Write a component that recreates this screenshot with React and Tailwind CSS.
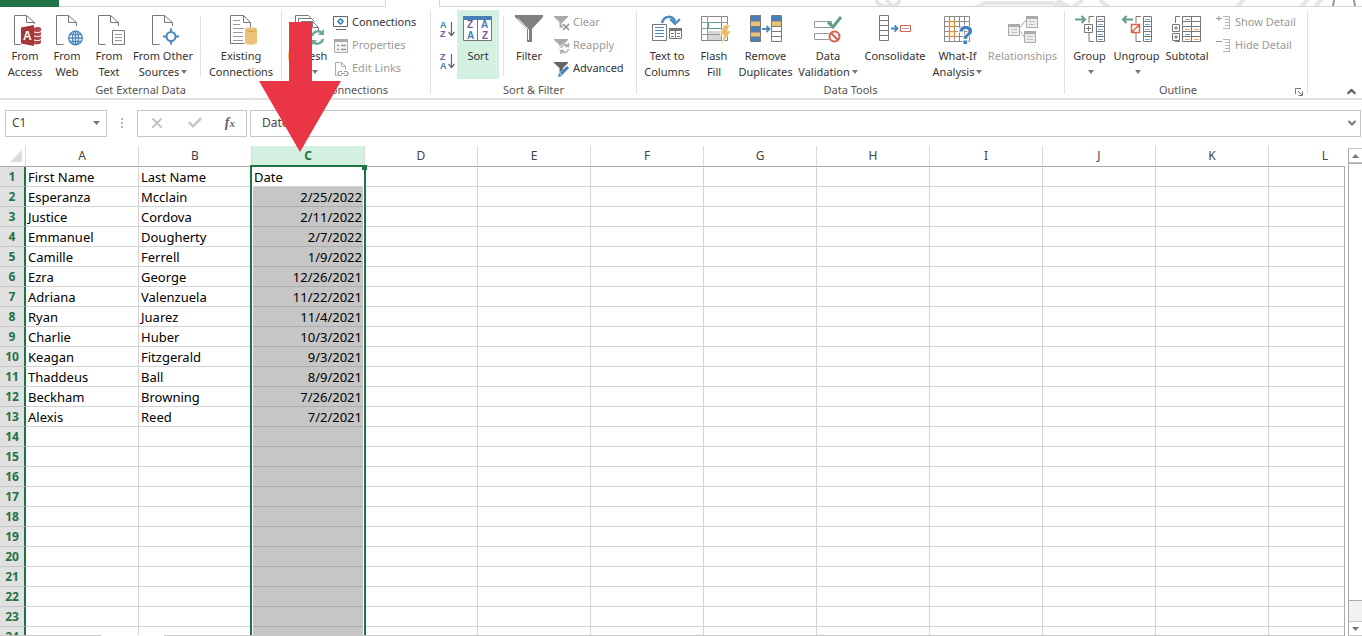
import clsx from "clsx";
import { ChevronDown, ChevronUp, X, Check } from "lucide-react";

const people = [
  ["Esperanza", "Mcclain", "2/25/2022"],
  ["Justice", "Cordova", "2/11/2022"],
  ["Emmanuel", "Dougherty", "2/7/2022"],
  ["Camille", "Ferrell", "1/9/2022"],
  ["Ezra", "George", "12/26/2021"],
  ["Adriana", "Valenzuela", "11/22/2021"],
  ["Ryan", "Juarez", "11/4/2021"],
  ["Charlie", "Huber", "10/3/2021"],
  ["Keagan", "Fitzgerald", "9/3/2021"],
  ["Thaddeus", "Ball", "8/9/2021"],
  ["Beckham", "Browning", "7/26/2021"],
  ["Alexis", "Reed", "7/2/2021"],
];

const columns = ["A", "B", "C", "D", "E", "F", "G", "H", "I", "J", "K", "L"];
const rows = [["First Name", "Last Name", "Date"], ...people];
while (rows.length < 24) rows.push([]);

/* ---------- icons ---------- */

const Icon = ({ children, size = 32 }) => (
  <svg
    width={size}
    height={size}
    viewBox={`0 0 ${size} ${size}`}
    fill="none"
    className="shrink-0 overflow-visible font-['Liberation_Sans',sans-serif]"
    aria-hidden="true"
  >
    {children}
  </svg>
);

const Page = () => (
  <>
    <path d="M5.5 1.5h12l7 7v22h-19z" fill="#fff" />
    <path d="M25.5 12V8.5l-8-7h-12v29h7" stroke="#777" />
    <path d="M17.5 1.5v7h8" stroke="#777" />
  </>
);

const AccessIcon = () => (
  <Icon>
    <Page />
    <path d="M12 10h21v22H12z" fill="#fff" />
    <path d="M25 14c2-1.500 7-1.500 7 .5v14c0 2-5 2.500-7 1.500z" fill="#b5484b" />
    <path d="M25 18c3 1 6 .5 7-.5M25 22c3 1 6 .5 7-.5M25 26c3 1 6 .5 7-.5" stroke="#fff" />
    <path d="M12 13.500 25 11v21l-13-2.500z" fill="#a4373a" />
    <text x="14" y="26" fontSize="12" fontWeight="700" fill="#fff">A</text>
  </Icon>
);

const WebIcon = () => (
  <Icon>
    <Page />
    <circle cx="24.500" cy="24" r="8" fill="#fff" />
    <g stroke="#4a86bf" strokeWidth="1.300">
      <circle cx="24.500" cy="24" r="6.800" />
      <ellipse cx="24.500" cy="24" rx="3" ry="6.800" />
      <path d="M24.500 17v14M17.500 24h14M18.500 20.500h12M18.500 27.500h12" />
    </g>
  </Icon>
);

const TextIcon = () => (
  <Icon>
    <Page />
    <path d="M19.500 16.500h12v14h-12z" fill="#fff" stroke="#777" />
    <path d="M22 20.500h7M22 23.500h7M22 26.500h7" stroke="#999" />
  </Icon>
);

const OtherSourcesIcon = () => (
  <Icon>
    <Page />
    <path d="M16 15h16v16H16z" fill="#fff" />
    <circle cx="24" cy="22.500" r="4.500" stroke="#4a86bf" strokeWidth="2" />
    <path d="M24 14.500v4M24 26.500v4M16 22.500h4M28 22.500h4" stroke="#4a86bf" strokeWidth="2" />
  </Icon>
);

const ExistingIcon = () => (
  <Icon>
    <path d="M5.500 1.500h13l7 7v21h-20z" fill="#fff" stroke="#777" />
    <path d="M18.500 1.500v7h7" stroke="#777" />
    <path d="M8 6.500h7M8 10.500h7M8 14.500h11M8 18.500h10M8 22.500h10M8 26.500h10" stroke="#999" />
    <path d="M19.500 13h13v18h-13z" fill="#fff" />
    <path d="M20 15.500c0-3 12-3 12 0v13c0 3-12 3-12 0z" fill="#eac27a" />
    <path d="M21.500 16c2 2 7 2 9 0" stroke="#c99a48" />
  </Icon>
);

const RefreshIcon = () => (
  <Icon>
    <path d="M3.500 22V1.500h13l3 3M6.500 25V4.500h13l3 3" stroke="#777" />
    <path d="M9.500 7.500h11l6 6v13h-17z" fill="#fff" stroke="#777" />
    <path d="M20.500 7.500v6h6" stroke="#777" />
    <circle cx="25.500" cy="23.500" r="7" fill="#fff" />
    <path d="M20 22a6 6 0 0 1 10-3M31 25a6 6 0 0 1-10 3" stroke="#6fa892" strokeWidth="2.500" />
    <path d="M32 15v6h-6zM19 32v-6h6z" fill="#6fa892" />
  </Icon>
);

const SortIcon = () => (
  <Icon>
    <path d="M1.500 2.500h28v24h-28z" fill="#fff" stroke="#777" />
    <path d="M1 2h29v4H1z" fill="#4a7fb8" />
    <path d="M15.500 6v20" stroke="#777" />
    <g fontSize="10" fontWeight="700">
      <text x="5" y="14" fill="#8352a5">Z</text>
      <text x="5" y="25" fill="#3f7fb9">A</text>
      <text x="19" y="14" fill="#3f7fb9">A</text>
      <text x="20" y="25" fill="#8352a5">Z</text>
    </g>
  </Icon>
);

const OrderIcon = ({ top, bottom }) => (
  <Icon size={18}>
    <g fontSize="9" fontWeight="700">
      <text x="1" y="8" fill={top === "A" ? "#3f7fb9" : "#8352a5"}>{top}</text>
      <text x="1" y="17" fill={bottom === "A" ? "#3f7fb9" : "#8352a5"}>{bottom}</text>
    </g>
    <path d="M12.500 2v13M9.500 12l3 3.500 3-3.500" stroke="#666" strokeWidth="1.200" />
  </Icon>
);

const FilterIcon = () => (
  <Icon>
    <path d="M2 1h28v2L19 15v13h-5V15L2 3z" fill="#808080" />
    <path d="M5 4.500 15.500 15.500V26" stroke="#fff" />
  </Icon>
);

const TextColumnsIcon = () => (
  <Icon>
    <path d="M1.500 10.500h14v16h-14z" fill="#fff" stroke="#777" />
    <path d="M4 13.500h9M4 16.500h9M4 19.500h9M4 22.500h9" stroke="#4a86bf" />
    <path d="M18.500 14.500h12v10h-12z" fill="#fff" stroke="#777" />
    <path d="M18 14h13v3H18z" fill="#777" />
    <path d="M24.500 15v10M20 19.500h3M26 19.500h3M20 22.500h3M26 22.500h3" stroke="#777" />
    <path d="M11 9c2-8 11-8 13-1" stroke="#4a86bf" strokeWidth="2.500" />
    <path d="m19 5 5 5 5-5" stroke="#4a86bf" strokeWidth="2" />
  </Icon>
);

const FlashFillIcon = () => (
  <Icon>
    <path d="M3.500 2.500h26v24h-26z" fill="#fff" stroke="#888" />
    <path d="M10 17h13v9H10z" fill="#d5d5d5" />
    <path d="M3 8.500h26M3 14.500h26M3 20.500h26M9.500 2v24M23.500 2v24" stroke="#999" />
    <path d="M10.500 8.500h13v6h-13z" fill="#fff" stroke="#5fa08a" />
    <path d="M26 11h6l-3 6h4L23 31l3-10h-4z" fill="#edba64" stroke="#fff" strokeWidth=".6" />
  </Icon>
);

const DuplicatesIcon = () => (
  <Icon>
    <path d="M1 1h10v27H1zM22 1h9v6h-9z" fill="#467fb9" />
    <path d="M1 7h10v5H1zM1 18h10v5H1zM22 7h9v5h-9z" fill="#eac27a" />
    <path d="M.5 1.500h10v26H.5zM21.500 1.500h10v26h-10zM1 7h10M1 12.500h10M1 18h10M1 23h10M22 7h9M22 12.500h9M22 17.500h9M22 22.500h9" stroke="#7a7a7a" />
    <path d="M12 15h7M16.500 12l3 3-3 3" stroke="#4a86bf" strokeWidth="1.800" />
  </Icon>
);

const ValidationIcon = () => (
  <Icon>
    <path d="M2.500 7.500h17v6h-17zM2.500 19.500h17v6h-17z" fill="#fff" stroke="#999" />
    <path d="m16 8 5 5 8-10" stroke="#5fa08a" strokeWidth="3" />
    <circle cx="22.500" cy="22.500" r="6.500" fill="#fff" />
    <circle cx="22.500" cy="22.500" r="5" stroke="#d9604c" strokeWidth="2" />
    <path d="m19 19 7 7" stroke="#d9604c" strokeWidth="2" />
  </Icon>
);

const ConsolidateIcon = () => (
  <Icon>
    <path d="M.5 1.500h9v25h-9zM1 6.500h8M1 11.500h8M1 16.500h8M1 21.500h8" stroke="#777" />
    <path d="M12 14.500h6M15.500 11.500l3 3-3 3" stroke="#4a86bf" strokeWidth="1.800" />
    <path d="M21.500 11.500h10v6h-10z" stroke="#d9604c" />
    <path d="M23 14.500h7" stroke="#aaa" />
  </Icon>
);

const WhatIfIcon = () => (
  <Icon>
    <path d="M2.500 2.500h25v25h-25zM2 7.500h25M2 12.500h25M2 17.500h25M2 22.500h25M7.500 2v25M12.500 2v25M17.500 2v25M22.500 2v25" stroke="#8a8a8a" />
    <path d="M7.500 7.500h5v5h-5zM7.500 17.500h5v5h-5z" fill="#fff" stroke="#e29a3c" strokeWidth="1.500" />
    <text x="16" y="30" fontSize="25" fontWeight="700" fill="#3f7fb9" stroke="#fff" strokeWidth="2" paintOrder="stroke">?</text>
  </Icon>
);

const RelationshipsIcon = () => (
  <Icon>
    <path d="M12 14.500 19 6M12 16l6 8" stroke="#aaa" />
    <g fill="#ececec" stroke="#aaa">
      <path d="M1.500 10.500h11v11h-11zM19.500 2.500h11v11h-11zM17.500 17.500h11v11h-11z" />
    </g>
    <path d="M1 10h12v3H1zM19 2h12v3H19zM17 17h12v3H17z" fill="#aaa" />
    <path d="M4 15.500h6M4 18.500h6M22 7.500h6M22 10.500h6M20 22.500h6M20 25.500h6" stroke="#c2c2c2" />
  </Icon>
);

const GroupIcon = () => (
  <Icon>
    <path d="M22.500 2.500h8v25h-8zM22 7.500h9M22 12.500h9M22 17.500h9M22 22.500h9M20 2.500h-5V9M15 19v8.500h5" stroke="#777" />
    <path d="M24 5.500h5M24 10.500h5M24 15.500h5M24 20.500h5M24 25.500h5" stroke="#77a9d8" />
    <path d="M10.500 10.500h8v8h-8zM12 14.500h5M14.500 12v5" stroke="#777" />
    <path d="M1 5.500h9M7.500 2l3.500 3.500L7.500 9" stroke="#5fa08a" strokeWidth="2" />
  </Icon>
);

const UngroupIcon = () => (
  <Icon>
    <path d="M22.500 2.500h8v25h-8zM22 7.500h9M22 12.500h9M22 17.500h9M22 22.500h9M20 2.500h-5V9M15 19v8.500h5" stroke="#777" />
    <path d="M24 5.500h5M24 10.500h5M24 15.500h5M24 20.500h5M24 25.500h5" stroke="#77a9d8" />
    <path d="M10.500 10.500h8v8h-8zM11 18l7-7" stroke="#d9604c" strokeWidth="1.500" />
    <path d="M2 5.500h10M5.500 2 2 5.500 5.500 9" stroke="#5fa08a" strokeWidth="2" />
  </Icon>
);

const SubtotalIcon = () => (
  <Icon>
    <path d="M11.500 2.500h18v25h-18zM20.500 2v25M11 7.500h19M11 12.500h19M11 17.500h19M11 22.500h19M9 2.500H4.500V9M4 27.500h5" stroke="#777" />
    <path d="M14 5.500h5M14 20.500h5" stroke="#77a9d8" />
    <path d="M14 15.500h5M23 15.500h5M14 25.500h5M23 25.500h5" stroke="#e8a66a" />
    <path d="M1.500 10.500h7v7h-7zM3 14h4M5 12v4M1.500 19.500h7v7h-7zM3 23h4M5 21v4" stroke="#777" />
  </Icon>
);

const ConnectionsIcon = () => (
  <Icon size={16}>
    <path d="M.5 1.500h14v10H.5zM3 14.500h10" stroke="#666" />
    <circle cx="7.500" cy="6.500" r="2" stroke="#3f7fb9" strokeWidth="1.500" />
    <path d="M7.500 3v1.500M7.500 8.500V10M4 6.500h1.500M9.500 6.500H11" stroke="#3f7fb9" />
  </Icon>
);

const PropertiesIcon = () => (
  <Icon size={16}>
    <path d="M1.500 1.500h13v13h-13z" fill="#f6f6f6" stroke="#aaa" />
    <path d="M1 1h14v3H1z" fill="#aaa" />
    <path d="M4 7.500h2M8 7.500h5M4 11.500h2M8 11.500h5" stroke="#999" strokeWidth="1.500" />
  </Icon>
);

const EditLinksIcon = () => (
  <Icon size={16}>
    <path d="M4 14.500H2.500v-13h6l4 4v3M8.500 1.500v4h4" stroke="#aaa" />
    <path d="M9 10.500H7a2 2 0 0 0 0 4h2M11 10.500h2a2 2 0 0 1 0 4h-2M8 12.500h4" stroke="#999" strokeWidth="1.200" />
  </Icon>
);

const Funnel = ({ color }) => (
  <path d="M0 1h14v1L9 7v7L5.500 12V7L0 2z" fill={color} />
);

const ClearIcon = () => (
  <Icon size={16}>
    <Funnel color="#aaa" />
    <path d="m8 8 7 7M15 8l-7 7" stroke="#fff" strokeWidth="3" />
    <path d="m9 9 6 6M15 9l-6 6" stroke="#8c8c8c" strokeWidth="1.500" />
  </Icon>
);

const ReapplyIcon = () => (
  <Icon size={16}>
    <Funnel color="#aaa" />
    <circle cx="10.500" cy="10.500" r="5" fill="#fff" />
    <path d="M7 10a4 4 0 0 1 7-2M14.500 11a4 4 0 0 1-7 2M14.500 5v3.500H11M7 16v-3.500h3" stroke="#aaa" strokeWidth="1.500" />
  </Icon>
);

const AdvancedIcon = () => (
  <Icon size={16}>
    <Funnel color="#666" />
    <path d="m7 14 7-7" stroke="#fff" strokeWidth="5" />
    <path d="m7 13 7-7" stroke="#3f7fb9" strokeWidth="3" />
    <path d="m4 16 1-4 3 3z" fill="#3f7fb9" />
  </Icon>
);

const DetailIcon = ({ plus }) => (
  <Icon size={16}>
    <path d={plus ? "M0 3.500h6M3 1v5" : "M0 3.500h6"} stroke="#999" />
    <path d="M7 1.500h7M9 4.500h5M9 7.500h5M9 10.500h5M7 13.500h7M13.500 1v13" stroke="#b5b5b5" />
  </Icon>
);

const Arrow = ({ className = "text-[#777]" }) => (
  <svg width="6" height="4" viewBox="0 0 6 4" className={clsx("inline-block", className)} aria-hidden="true">
    <path d="M0 0h6L3 4z" fill="currentColor" />
  </svg>
);

/* ---------- ribbon ---------- */

const BigButton = ({ icon, lines, width, arrow, active, disabled }) => (
  <button
    disabled={disabled}
    className={clsx(
      "flex h-[69px] shrink-0 flex-col items-center gap-0.5 pt-1 text-center leading-4 whitespace-nowrap",
      width,
      active && "bg-[#d3f0e0]",
      disabled && "text-[#9a9a9a]"
    )}
  >
    {icon}
    <span>
      {lines[0]}
      <br />
      {lines[1]}
      {arrow && <Arrow className="mb-0.5 ml-0.5 text-[#777]" />}
    </span>
  </button>
);

const SmallButton = ({ icon, label, disabled }) => (
  <button
    disabled={disabled}
    className={clsx("flex h-[23px] items-center gap-[3px] whitespace-nowrap", disabled && "text-[#9a9a9a]")}
  >
    {icon}
    {label}
  </button>
);

const Divider = ({ className = "my-1" }) => (
  <div className={clsx("w-px shrink-0 bg-[#e1e1e1]", className)} />
);

const Group = ({ title, width, children, launcher }) => (
  <section className={clsx("flex shrink-0 flex-col", width)}>
    <div className="flex h-[75px] pt-[3px]">{children}</div>
    <div className={clsx("relative text-center leading-4 text-[#555]", launcher && "pr-4")}>
      {title}
      {launcher && (
        <button aria-label={`${title} settings`} className="absolute top-1.5 right-1">
          <svg width="8" height="8" viewBox="0 0 8 8" fill="none" stroke="#777">
            <path d="M.5 6V.5H6M3 3l4 4M7.500 3.500v4h-4" />
          </svg>
        </button>
      )}
    </div>
  </section>
);

const Ribbon = () => (
  <div className="flex h-[93px] shrink-0 border-b-2 border-[#e1e1e1] text-[11px] text-[#333]">
    <Group title="Get External Data" width="w-[281px]">
      <div className="flex px-1">
        <BigButton icon={<AccessIcon />} lines={["From", "Access"]} width="w-[42px]" />
        <BigButton icon={<WebIcon />} lines={["From", "Web"]} width="w-[42px]" />
        <BigButton icon={<TextIcon />} lines={["From", "Text"]} width="w-[42px]" />
        <BigButton icon={<OtherSourcesIcon />} lines={["From Other", "Sources"]} width="w-[66px]" arrow />
      </div>
      <Divider className="my-1.5" />
      <div className="flex px-1">
        <BigButton icon={<ExistingIcon />} lines={["Existing", "Connections"]} width="w-[72px]" />
      </div>
    </Group>
    <Divider />

    <Group title="Connections" width="w-[148px]">
      <BigButton icon={<RefreshIcon />} lines={["Refresh", "All"]} width="w-[51px]" arrow />
      <div className="pt-px">
        <SmallButton icon={<ConnectionsIcon />} label="Connections" />
        <SmallButton icon={<PropertiesIcon />} label="Properties" disabled />
        <SmallButton icon={<EditLinksIcon />} label="Edit Links" disabled />
      </div>
    </Group>
    <Divider />

    <Group title="Sort & Filter" width="w-[205px]">
      <div className="flex w-[26px] flex-col items-end gap-3.5 py-2.5">
        <button aria-label="Sort A to Z"><OrderIcon top="A" bottom="Z" /></button>
        <button aria-label="Sort Z to A"><OrderIcon top="Z" bottom="A" /></button>
      </div>
      <BigButton icon={<SortIcon />} lines={["Sort"]} width="w-[42px]" active />
      <Divider className="mx-1 my-1.5" />
      <BigButton icon={<FilterIcon />} lines={["Filter"]} width="w-[42px]" />
      <div className="pt-px pl-1">
        <SmallButton icon={<ClearIcon />} label="Clear" disabled />
        <SmallButton icon={<ReapplyIcon />} label="Reapply" disabled />
        <SmallButton icon={<AdvancedIcon />} label="Advanced" />
      </div>
    </Group>
    <Divider />

    <Group title="Data Tools" width="w-[427px]">
      <div className="flex px-1">
        <BigButton icon={<TextColumnsIcon />} lines={["Text to", "Columns"]} width="w-[52px]" />
        <BigButton icon={<FlashFillIcon />} lines={["Flash", "Fill"]} width="w-[42px]" />
        <BigButton icon={<DuplicatesIcon />} lines={["Remove", "Duplicates"]} width="w-[61px]" />
        <BigButton icon={<ValidationIcon />} lines={["Data", "Validation"]} width="w-[64px]" arrow />
        <BigButton icon={<ConsolidateIcon />} lines={["Consolidate"]} width="w-[70px]" />
        <BigButton icon={<WhatIfIcon />} lines={["What-If", "Analysis"]} width="w-[55px]" arrow />
        <BigButton icon={<RelationshipsIcon />} lines={["Relationships"]} width="w-[75px]" disabled />
      </div>
    </Group>
    <Divider />

    <Group title="Outline" width="w-[242px]" launcher>
      <div className="flex pl-1">
        <BigButton icon={<GroupIcon />} lines={["Group"]} width="w-[41px]" arrow />
        <BigButton icon={<UngroupIcon />} lines={["Ungroup"]} width="w-[53px]" arrow />
        <BigButton icon={<SubtotalIcon />} lines={["Subtotal"]} width="w-[48px]" />
      </div>
      <div className="pt-px pl-[5px]">
        <SmallButton icon={<DetailIcon plus />} label="Show Detail" disabled />
        <SmallButton icon={<DetailIcon />} label="Hide Detail" disabled />
      </div>
    </Group>
    <Divider />

    <div className="flex flex-1 items-end justify-end pr-1">
      <button aria-label="Collapse ribbon">
        <ChevronUp size={13} strokeWidth={4} color="#666" />
      </button>
    </div>
  </div>
);

const TabStrip = () => (
  <div className="flex h-[7px] shrink-0">
    <div className="w-[59px] bg-[#217346]" />
    <div className="w-[327px] border-r border-b border-[#d6d6d6]" />
    <div className="w-[53px]" />
    <div className="flex flex-1 justify-end overflow-hidden border-b border-l border-[#d6d6d6]">
      <svg width="502" height="6" viewBox="0 0 502 6" fill="none" stroke="#e6e6e6" strokeWidth="4" aria-hidden="true">
        <path d="M16 0c2 4 6 7 12 7s10-3 12-7M26 0l6 6M115 8l10-5h68l16 6M197 0l14 8 12-8M240 0l10 8M376 8l9-10M440 8l9-10M454 8l9-10" />
        <path d="M474 0l-1 6M494 0l1 6" stroke="#999" strokeWidth="2" />
      </svg>
    </div>
  </div>
);

/* ---------- formula bar ---------- */

const FormulaBar = () => (
  <div className="flex h-[46px] shrink-0 items-center pr-px pl-[5px] text-xs text-[#444]">
    <div className="flex h-[27px] w-[102px] items-center border border-[#c6c6c6] pr-1.5">
      <input aria-label="Name box" defaultValue="C1" className="w-full min-w-0 px-1.5 outline-none" />
      <button aria-label="Show names" className="flex">
        <svg width="7" height="4" viewBox="0 0 7 4"><path d="M0 0h7L3.500 4z" fill="#777" /></svg>
      </button>
    </div>
    <div className="flex w-[30px] flex-col items-center gap-0.5">
      <i className="size-0.5 bg-[#b5b5b5]" />
      <i className="size-0.5 bg-[#b5b5b5]" />
      <i className="size-0.5 bg-[#b5b5b5]" />
    </div>
    <div className="mr-[3px] flex h-[27px] w-[110px] items-center justify-around border border-[#c6c6c6]">
      <button aria-label="Cancel"><X size={16} strokeWidth={3} color="#c4c4c4" /></button>
      <button aria-label="Enter"><Check size={16} strokeWidth={4} color="#c9c9c9" /></button>
      <button aria-label="Insert function" className="font-['Liberation_Serif',serif] text-sm font-bold text-[#666] italic">
        f<span className="text-[11px]">x</span>
      </button>
    </div>
    <div className="flex h-[27px] flex-1 items-center border border-[#c6c6c6] pr-0.5">
      <input aria-label="Formula bar" defaultValue="Date" className="w-full min-w-0 px-[11px] outline-none" />
      <button aria-label="Expand formula bar">
        <ChevronDown size={12} strokeWidth={4} color="#777" />
      </button>
    </div>
  </div>
);

/* ---------- sheet ---------- */

const Sheet = () => (
  <div className="relative min-w-0 flex-1 overflow-hidden">
    <table className="w-[1382px] table-fixed border-separate border-spacing-0 text-[13px] leading-4 text-black">
      <colgroup>
        <col className="w-[26px]" />
        {columns.map((c) => (
          <col key={c} className="w-[113px]" />
        ))}
      </colgroup>
      <thead>
        <tr className="h-[21px] text-xs text-[#444]">
          <th className="border-r border-b border-r-[#d9d9d9] border-b-[#ababab] p-0">
            <svg width="12" height="12" viewBox="0 0 12 12" className="ml-2.5"><path d="M12 0v12H0z" fill="#dcdcdc" /></svg>
          </th>
          {columns.map((c) => (
            <th
              key={c}
              scope="col"
              className={clsx(
                "border-r border-b border-r-[#d9d9d9] border-b-[#ababab] p-0",
                c === "C" ? "bg-[#d3f0e0] font-bold text-[#217346]" : "font-normal"
              )}
            >
              {c}
            </th>
          ))}
        </tr>
      </thead>
      <tbody>
        {rows.map((row, r) => (
          <tr key={r} className="h-5">
            <th
              scope="row"
              className="border-r-2 border-b border-r-[#217346] border-b-[#c6c6c6] bg-[#e1e1e1] p-0 text-center text-xs leading-4 font-bold text-[#217346]"
            >
              {r + 1}
            </th>
            {columns.map((c, i) => (
              <td
                key={c}
                className={clsx(
                  "border-r border-b border-r-[#d4d4d4] px-0.5 py-0 whitespace-nowrap",
                  c === "C" && r > 0 ? "border-b-[#adadad] bg-[#c6c6c6] text-right" : "border-b-[#d4d4d4]"
                )}
              >
                {row[i]}
              </td>
            ))}
          </tr>
        ))}
      </tbody>
    </table>
    {/* selection frame around column C */}
    <div className="pointer-events-none absolute top-[19px] -bottom-1 left-[250px] w-[116px] border-2 border-[#217346] ring-1 ring-white ring-inset">
      <span className="absolute -top-0.5 -right-[3px] size-[5px] bg-[#217346]" />
    </div>
    {/* top edge of the sheet tabs, open above the active one */}
    <div className="absolute inset-x-0 bottom-0 flex h-px">
      <div className="w-[101px] bg-[#c6c6c6]" />
      <div className="w-[63px] bg-white" />
      <div className="flex-1 bg-[#c6c6c6]" />
    </div>
  </div>
);

const ScrollBar = () => (
  <div className="mt-0.5 ml-[3px] flex w-[14px] shrink-0 flex-col border-l border-[#ababab] bg-[#f1f2f2]">
    <button aria-label="Scroll up" className="flex h-[15px] items-center justify-center border-y border-[#c6c6c6] bg-white">
      <svg width="7" height="4" viewBox="0 0 7 4"><path d="M0 4h7L3.500 0z" fill="#777" /></svg>
    </button>
    <div className="flex-1 border-y border-[#ababab] bg-white" />
    <div className="h-5" />
    <button aria-label="Scroll down" className="flex h-[15px] items-center justify-center border-t border-b border-[#c6c6c6] bg-white">
      <svg width="7" height="4" viewBox="0 0 7 4"><path d="M0 0h7L3.500 4z" fill="#777" /></svg>
    </button>
  </div>
);

const App = () => {
  return (
    <div className="relative flex h-screen flex-col overflow-hidden bg-white font-['Noto_Sans','Open_Sans',sans-serif]">
      <TabStrip />
      <Ribbon />
      <FormulaBar />
      <div className="flex min-h-0 flex-1">
        <Sheet />
        <div className="mt-5 w-px bg-[#ababab]" />
        <ScrollBar />
      </div>

      {/* pointer to the column header */}
      <svg
        width="82"
        height="130"
        viewBox="0 0 82 130"
        className="pointer-events-none absolute top-[22px] left-[259px]"
        aria-hidden="true"
      >
        <path d="M30 0h23v59h29L41 130 0 59h30z" fill="#ea3547" />
      </svg>
    </div>
  );
};

export default App;
